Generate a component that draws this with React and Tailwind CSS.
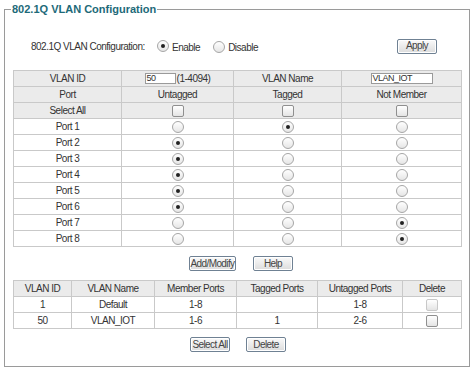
import React from 'react';

const Radio = ({ checked }) => (
    <span className="inline-flex items-center justify-center w-[12px] h-[12px] rounded-full border border-[#a6a6a6] bg-gradient-to-b from-[#ffffff] to-[#e6e6e6] align-middle">
        {checked && <span className="w-[4px] h-[4px] rounded-full bg-[#222]" />}
    </span>
);

const Check = ({ faded }) => (
    <span
        className={`inline-block w-[12px] h-[12px] rounded-[2px] border align-middle bg-gradient-to-b from-[#ffffff] to-[#e4e4e4] ${
            faded ? 'border-[#c8c8c8]' : 'border-[#8f8f8f]'
        }`}
    />
);

const Btn = ({ children, w }) => (
    <button className={`${w} h-[15px] rounded-[2px] border border-[#6f8193] bg-gradient-to-b from-[#fafafa] to-[#dcdcdc] text-[10px] leading-none text-[#444] whitespace-nowrap tracking-[-0.6px] shadow-[inset_0_0_0_1px_#fff]`}>
        {children}
    </button>
);

const ports = [
    { name: 'Port 1', sel: 1 },
    { name: 'Port 2', sel: 0 },
    { name: 'Port 3', sel: 0 },
    { name: 'Port 4', sel: 0 },
    { name: 'Port 5', sel: 0 },
    { name: 'Port 6', sel: 0 },
    { name: 'Port 7', sel: 2 },
    { name: 'Port 8', sel: 2 },
];

const vlans = [
    { id: '1', name: 'Default', member: '1-8', tagged: '', untagged: '1-8', faded: true },
    { id: '50', name: 'VLAN_IOT', member: '1-6', tagged: '1', untagged: '2-6', faded: false },
];

const cell = 'border border-[#c9c9c9] h-[16px] p-0 text-center leading-none whitespace-nowrap';
const head = `${cell} bg-[#ebebeb]`;

export default function App() {
    return (
        <div className="w-[474px] h-[372px] bg-white text-[10px] tracking-[-0.5px] text-[#333] font-['Liberation_Sans',Arial,sans-serif] pt-[2px]">
            <fieldset className="mx-[4px] h-[365px] border border-[#9a9a9a]">
                <legend className="ml-[6px] px-[1px] text-[11px] font-bold tracking-normal text-[#1d6a79] leading-[15px]">
                    802.1Q VLAN Configuration
                </legend>

                <div className="flex items-center h-[16px] mt-[21px] whitespace-nowrap">
                    <span className="ml-[26px] w-[126px]">802.1Q VLAN Configuration:</span>
                    <Radio checked />
                    <span className="ml-[3px] mt-[2px]">Enable</span>
                    <span className="ml-[13px]"><Radio /></span>
                    <span className="ml-[3px] mt-[2px]">Disable</span>
                    <span className="ml-auto mr-[32px]"><Btn w="w-[40px]">Apply</Btn></span>
                </div>

                <table className="ml-[8px] mt-[16px] w-[448px] border-collapse table-fixed">
                    <colgroup>
                        <col className="w-[108px]" />
                        <col className="w-[112px]" />
                        <col className="w-[108px]" />
                        <col className="w-[120px]" />
                    </colgroup>
                    <tbody>
                        <tr>
                            <td className={head}>VLAN ID</td>
                            <td className={`${cell} bg-[#ebebeb]`}>
                                <span className="inline-flex items-center">
                                    <span className="w-[31px] h-[11px] border border-[#9a9a9a] bg-white text-[9px] leading-[9px] text-left pl-[1px]">50</span>
                                    <span className="ml-[1px]">(1-4094)</span>
                                </span>
                            </td>
                            <td className={head}>VLAN Name</td>
                            <td className={head}>
                                <span className="inline-block w-[62px] h-[11px] border border-[#9a9a9a] bg-white text-[9px] leading-[9px] text-left pl-[1px] align-middle">VLAN_IOT</span>
                            </td>
                        </tr>
                        <tr>
                            <td className={head}>Port</td>
                            <td className={head}>Untagged</td>
                            <td className={head}>Tagged</td>
                            <td className={head}>Not Member</td>
                        </tr>
                        <tr>
                            <td className={head}>Select All</td>
                            <td className={head}><Check /></td>
                            <td className={head}><Check /></td>
                            <td className={head}><Check /></td>
                        </tr>
                        {ports.map((p) => (
                            <tr key={p.name}>
                                <td className={cell}>{p.name}</td>
                                <td className={cell}><Radio checked={p.sel === 0} /></td>
                                <td className={cell}><Radio checked={p.sel === 1} /></td>
                                <td className={cell}><Radio checked={p.sel === 2} /></td>
                            </tr>
                        ))}
                    </tbody>
                </table>

                <div className="flex justify-center gap-[17px] mt-[9px] pl-[8px]">
                    <Btn w="w-[47px]">Add/Modify</Btn>
                    <Btn w="w-[40px]">Help</Btn>
                </div>

                <table className="ml-[8px] mt-[9px] w-[448px] border-collapse table-fixed">
                    <colgroup>
                        <col className="w-[58px]" />
                        <col className="w-[83px]" />
                        <col className="w-[82px]" />
                        <col className="w-[81px]" />
                        <col className="w-[85px]" />
                        <col className="w-[59px]" />
                    </colgroup>
                    <tbody>
                        <tr>
                            <td className={head}>VLAN ID</td>
                            <td className={head}>VLAN Name</td>
                            <td className={head}>Member Ports</td>
                            <td className={head}>Tagged Ports</td>
                            <td className={head}>Untagged Ports</td>
                            <td className={head}>Delete</td>
                        </tr>
                        {vlans.map((v) => (
                            <tr key={v.id}>
                                <td className={cell}>{v.id}</td>
                                <td className={cell}>{v.name}</td>
                                <td className={cell}>{v.member}</td>
                                <td className={cell}>{v.tagged}</td>
                                <td className={cell}>{v.untagged}</td>
                                <td className={cell}><Check faded={v.faded} /></td>
                            </tr>
                        ))}
                    </tbody>
                </table>

                <div className="flex justify-center gap-[16px] mt-[8px] pl-[2px]">
                    <Btn w="w-[40px]">Select All</Btn>
                    <Btn w="w-[40px]">Delete</Btn>
                </div>
            </fieldset>
        </div>
    );
}
